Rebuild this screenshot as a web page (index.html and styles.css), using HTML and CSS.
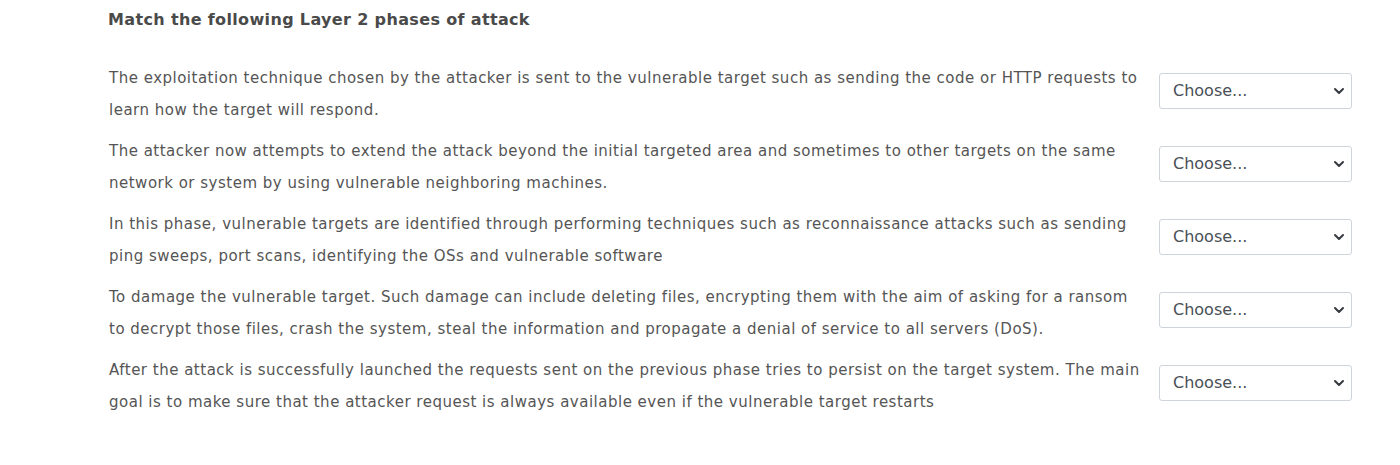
FILE: index.html
```html
<!DOCTYPE html>
<html>
<head>
<meta charset="utf-8">
<link rel="stylesheet" href="styles.css">
</head>
<body>
<div class="page">
  <h2 class="title">Match the following Layer 2 phases of attack</h2>
  <div class="rows">
    <div class="row">
      <p class="text">The exploitation technique chosen by the attacker is sent to the vulnerable target such as sending the code or HTTP requests to learn how the target will respond.</p>
      <div class="select"><span>Choose...</span><svg viewBox="0 0 12 12" width="12" height="12"><path d="M2 4l4 4 4-4" fill="none" stroke="#343a40" stroke-width="2" stroke-linecap="round" stroke-linejoin="round"/></svg></div>
    </div>
    <div class="row">
      <p class="text">The attacker now attempts to extend the attack beyond the initial targeted area and sometimes to other targets on the same network or system by using vulnerable neighboring machines.</p>
      <div class="select"><span>Choose...</span><svg viewBox="0 0 12 12" width="12" height="12"><path d="M2 4l4 4 4-4" fill="none" stroke="#343a40" stroke-width="2" stroke-linecap="round" stroke-linejoin="round"/></svg></div>
    </div>
    <div class="row">
      <p class="text">In this phase, vulnerable targets are identified through performing techniques such as reconnaissance attacks such as sending ping sweeps, port scans, identifying the OSs and vulnerable software</p>
      <div class="select"><span>Choose...</span><svg viewBox="0 0 12 12" width="12" height="12"><path d="M2 4l4 4 4-4" fill="none" stroke="#343a40" stroke-width="2" stroke-linecap="round" stroke-linejoin="round"/></svg></div>
    </div>
    <div class="row">
      <p class="text">To damage the vulnerable target. Such damage can include deleting files, encrypting them with the aim of asking for a ransom to decrypt those files, crash the system, steal the information and propagate a denial of service to all servers (DoS).</p>
      <div class="select"><span>Choose...</span><svg viewBox="0 0 12 12" width="12" height="12"><path d="M2 4l4 4 4-4" fill="none" stroke="#343a40" stroke-width="2" stroke-linecap="round" stroke-linejoin="round"/></svg></div>
    </div>
    <div class="row">
      <p class="text">After the attack is successfully launched the requests sent on the previous phase tries to persist on the target system. The main goal is to make sure that the attacker request is always available even if the vulnerable target restarts</p>
      <div class="select"><span>Choose...</span><svg viewBox="0 0 12 12" width="12" height="12"><path d="M2 4l4 4 4-4" fill="none" stroke="#343a40" stroke-width="2" stroke-linecap="round" stroke-linejoin="round"/></svg></div>
    </div>
  </div>
</div>
</body>
</html>
```

FILE: styles.css
```css
html, body {
  margin: 0;
  padding: 0;
  background: #ffffff;
}
body {
  font-family: "DejaVu Sans", "Noto Sans", sans-serif;
  color: #555555;
}
.page {
  padding: 8px 48px 0 108px;
}
.title {
  margin: 0;
  font-size: 16px;
  font-weight: bold;
  color: #4a4a4a;
  line-height: 24px;
  letter-spacing: 0.35px;
}
.rows {
  display: flex;
  flex-direction: column;
  gap: 10px;
  margin-top: 31px;
}
.row {
  display: flex;
  align-items: center;
  gap: 12px;
}
.text {
  margin: 0;
  width: 1038px;
  font-size: 15px;
  letter-spacing: 0.5px;
  line-height: 31.5px;
  padding-left: 1px;
}
.select {
  width: 193px;
  height: 36px;
  box-sizing: border-box;
  border: 1px solid #ced4da;
  border-radius: 3px;
  display: flex;
  align-items: center;
  justify-content: space-between;
  padding: 0 6px 0 13px;
  font-size: 16px;
  color: #495057;
  margin-top: -8px;
  flex-shrink: 0;
}
```
